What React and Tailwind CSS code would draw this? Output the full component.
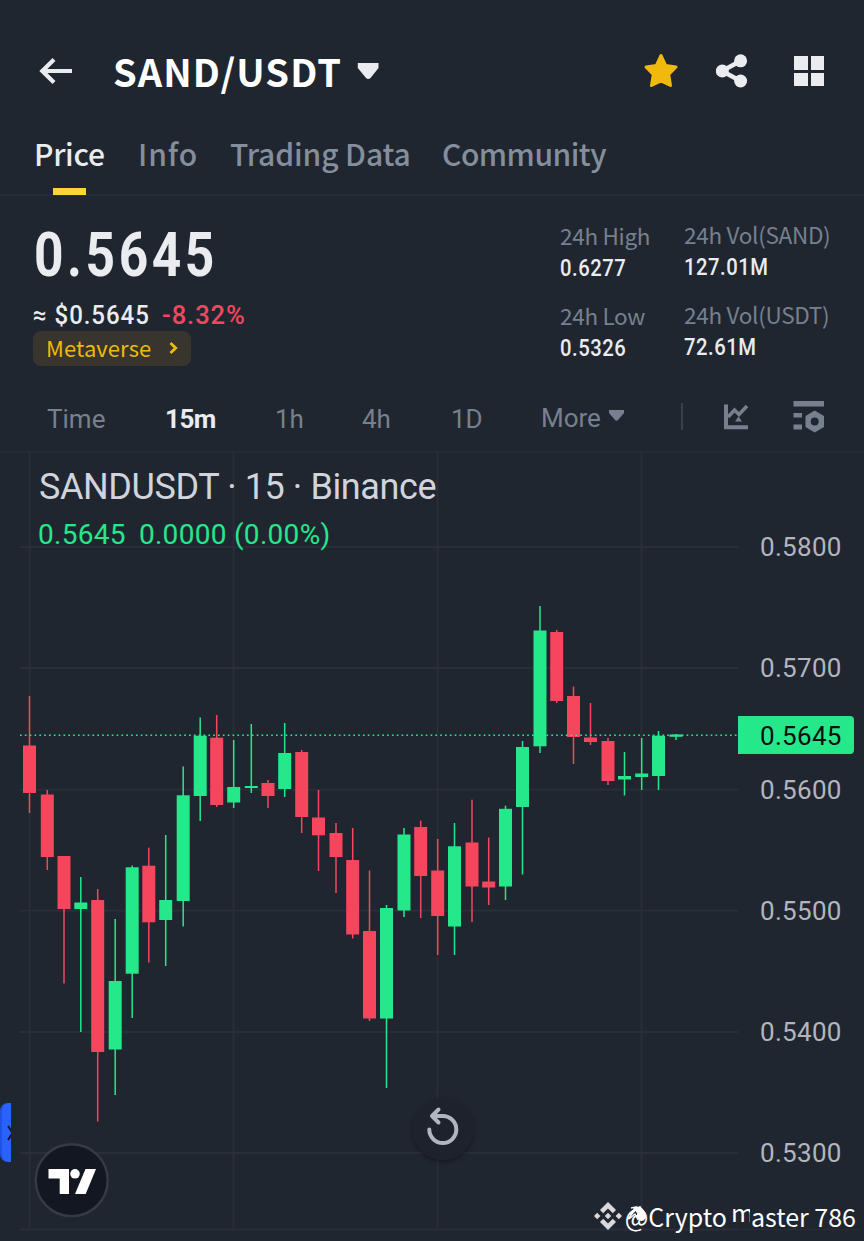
import { clsx } from "clsx";

const tabs = [
  { label: "Price", active: true, className: "ml-[34px] w-[104px] tracking-[-0.3px]" },
  { label: "Info", className: "w-[92px] tracking-[0.9px]" },
  { label: "Trading Data", className: "w-[212px] tracking-[-0.1px]" },
  { label: "Community", className: "tracking-[-0.5px]" },
];

const stats = [
  { label: "24h High", value: "0.6277" },
  { label: "24h Vol(SAND)", value: "127.01M" },
  { label: "24h Low", value: "0.5326" },
  { label: "24h Vol(USDT)", value: "72.61M" },
];

const intervals = [
  { label: "Time", className: "w-[119px]" },
  { label: "15m", active: true, className: "w-[109px] tracking-[-0.5px]" },
  { label: "1h", className: "w-[87px]" },
  { label: "4h", className: "w-[89px]" },
  { label: "1D", className: "w-[90px]" },
];

const prices = ["0.5800", "0.5700", "0.5600", "0.5500", "0.5400", "0.5300"];

// [x, high, low, body top, body bottom, rising]
const candles = [
  [29.5, 696, 813, 745.5, 793, 0],
  [47.3, 790, 870, 794.5, 857, 0],
  [64, 856, 983.5, 856, 909, 0],
  [80.8, 877, 1032, 902.5, 909, 1],
  [97.7, 889, 1121.5, 900, 1052, 0],
  [115.2, 919, 1095, 981, 1049.5, 1],
  [132.2, 865.5, 1018, 867.3, 973.7, 1],
  [148.8, 847.7, 962.5, 865.7, 922.3, 0],
  [165.7, 835, 966, 900, 920, 1],
  [183.2, 766.5, 926.5, 795.3, 901, 1],
  [200.2, 717.5, 821, 735.7, 796, 1],
  [216.7, 715, 807, 737.7, 805, 0],
  [233.7, 740, 808, 787, 802.5, 1],
  [251.3, 724, 793, 786, 788, 1],
  [268, 780, 808, 783, 796, 0],
  [284.7, 723, 797, 753, 789, 1],
  [301.7, 750, 833, 752, 817, 0],
  [318.5, 790, 871, 817.5, 835.3, 0],
  [336, 823, 893, 833, 857, 0],
  [352.7, 828, 938.5, 860, 934.5, 0],
  [369.5, 870.5, 1021, 931, 1018.5, 0],
  [386.5, 905, 1088, 908, 1018.5, 1],
  [404, 828, 917, 834.5, 910.5, 1],
  [420.7, 820.7, 918, 827, 876, 0],
  [437.7, 839, 955, 870.5, 916, 0],
  [454.5, 823, 955, 846.3, 926.5, 1],
  [472, 799.7, 922, 842.5, 886.5, 0],
  [488.7, 837.5, 905, 881.5, 887.5, 0],
  [505.5, 805.7, 900, 808.8, 886.5, 1],
  [522.5, 741, 874.5, 747, 807, 1],
  [540, 606, 753, 630.5, 746.3, 1],
  [556.7, 630, 703, 632, 701, 0],
  [573.5, 686.5, 764, 696, 737, 0],
  [590.5, 703, 745, 737.5, 742, 0],
  [608, 738, 785, 741, 781, 0],
  [624.5, 752, 795.5, 776, 779.5, 1],
  [641.7, 738, 790, 773.5, 777, 1],
  [658.5, 731, 790, 735.7, 776, 1],
  [676, 734, 740, 734.5, 736.8, 1],
];

function Header() {
  return (
    <header className="flex h-[142px] items-center text-[#eaecef]">
      <svg className="ml-[38px] h-[28px] w-[36px]" viewBox="38 57 36 28" fill="none" stroke="currentColor" strokeWidth="4.2">
        <path d="M72 71H42M54 59.500L42.300 71L54 82.500" />
      </svg>
      <h1 className="ml-[39px] w-[231px] whitespace-nowrap font-['Noto_Sans_CJK_SC','Noto_Sans',sans-serif] text-[38px] font-bold leading-none tracking-[1.1px] text-white">
        SAND/USDT
      </h1>
      <svg className="ml-[13px] h-[16px] w-[22px]" viewBox="357 63 22 16" fill="currentColor">
        <path d="M357.800 63H378.500V68L370.500 78Q368.200 80 366 78L357.800 68Z" />
      </svg>
      <svg className="ml-[264px] h-[36px] w-[36px]" viewBox="643 53 36 36" fill="#f0b90b" stroke="#f0b90b" strokeWidth="3" strokeLinejoin="round">
        <path d="M661 55.500L665.600 65.500L676 67L668.700 74.500L670.500 85.500L661 81L651.500 85.500L653.300 74.500L646 67L656.400 65.500Z" />
      </svg>
      <svg className="ml-[37px] h-[36px] w-[32px]" viewBox="716 53 32 36" fill="currentColor">
        <path d="M740.500 61L722 71L740.500 81" fill="none" stroke="currentColor" strokeWidth="4.500" />
        <circle cx="722.300" cy="71" r="6.500" />
        <circle cx="740.600" cy="60.800" r="6.500" />
        <circle cx="740.600" cy="81" r="6.500" />
      </svg>
      <div className="ml-[46px] grid grid-cols-2 gap-[3px]">
        <span className="size-[13.500px] bg-current" />
        <span className="size-[13.500px] bg-current" />
        <span className="size-[13.500px] bg-current" />
        <span className="size-[13.500px] bg-current" />
      </div>
    </header>
  );
}

function Tabs() {
  return (
    <nav className="flex h-[54px] border-b-2 border-[#272c35] font-['Noto_Sans_CJK_SC','Noto_Sans',sans-serif] text-[30px] font-medium leading-[23px] text-[#848e9c]">
      {tabs.map((tab) => (
        <div key={tab.label} className={clsx("flex flex-col whitespace-nowrap", tab.className)}>
          <span className={clsx(tab.active && "text-[#eaecef]")}>{tab.label}</span>
          {tab.active && <span className="mt-[23px] ml-[19px] h-[7px] w-[33px] shrink-0 bg-[#fcd535]" />}
        </div>
      ))}
    </nav>
  );
}

function Summary() {
  return (
    <section className="flex h-[183px] pt-[27px]">
      <div className="w-[526px] pl-[34px] text-[#eaecef]">
        <div className="h-[64px] w-[200px] origin-left scale-x-[0.83] text-[62px] font-bold leading-[64px] tracking-[4.300px]">0.5645</div>
        <div className="mt-[12px] flex h-[32px] items-center whitespace-nowrap text-[26px] font-medium leading-none tracking-[1px]">
          <span className="-ml-px w-[129px] origin-left scale-x-[0.925]">≈ $0.5645</span>
          <span className="origin-left scale-x-[0.98] text-[#f6465d]">-8.32%</span>
        </div>
        <div className="-ml-px flex h-[35px] w-[158px] items-center rounded-[8px] bg-[#37352d] pl-[13px] font-['Noto_Sans_CJK_SC','Noto_Sans',sans-serif] text-[22px] leading-none text-[#f0b90b]">
          <span className="-mt-[4px] w-[123px] tracking-[0.1px]">Metaverse</span>
          <svg className="-mt-px h-[12px] w-[9px]" viewBox="0 0 9 12" fill="none" stroke="currentColor" strokeWidth="2.800">
            <path d="M1.500 1L6.700 6L1.500 11" />
          </svg>
        </div>
      </div>
      <dl className="grid h-[160px] grid-cols-[124px_150px] grid-rows-[80px_80px] pl-[34px]">
        {stats.map((stat) => (
          <div key={stat.label} className="whitespace-nowrap even:-mt-px">
            <dt className="h-[28px] font-['Noto_Sans_CJK_SC','Noto_Sans',sans-serif] text-[22.500px] leading-[24px] tracking-[-0.3px] text-[#76808f]">
              {stat.label}
            </dt>
            <dd className="h-[34px] w-[120px] origin-left scale-x-[0.88] text-[23px] font-medium leading-[35px] tracking-[0.6px] text-[#eaecef]">
              {stat.value}
            </dd>
          </div>
        ))}
      </dl>
    </section>
  );
}

function Intervals() {
  return (
    <div className="flex h-[74px] items-center border-b-2 border-[#272b35] pt-[7px] pl-[47px] text-[26px] text-[#76808f]">
      {intervals.map((item) => (
        <span key={item.label} className={clsx("relative top-px", item.className, item.active && "-left-px font-bold text-[#eaecef]")}>
          {item.label}
        </span>
      ))}
      <span className="w-[68px]">More</span>
      <svg className="-mt-[6px] h-[11px] w-[15px]" viewBox="0 0 15 11" fill="currentColor">
        <path d="M0 0H15V3L9 10Q7.500 11.500 6 10L0 3Z" />
      </svg>
      <span className="-mt-[4px] ml-[57px] h-[27px] w-[2px] bg-[#38404c]" />
      <svg className="-mt-[3px] ml-[40px] h-[26px] w-[26px]" viewBox="723 404 26 26" fill="none" stroke="currentColor" strokeWidth="4">
        <path d="M726 404.500V427.300H748" />
        <path d="M728 417L734.500 410L739 414.500L747 406" strokeWidth="3.500" />
        <path d="M738.500 416.500L742 421.500H735Z" fill="currentColor" stroke="none" />
      </svg>
      <svg className="-mt-[3px] ml-[44px] h-[32px] w-[32px]" viewBox="793 402 32 32" fill="currentColor">
        <path d="M793.500 402H824V407.500H793.500ZM793.500 414H802V418.500H793.500ZM793.500 425.500H802V430.500H793.500Z" />
        <path fillRule="evenodd" d="M814.700 411.500L824 417V428L814.700 433.500L805.500 428V417ZM814.700 418.500A4 4 0 1 0 814.700 426.500A4 4 0 1 0 814.700 418.500Z" />
      </svg>
    </div>
  );
}

function Candles() {
  return (
    <svg className="h-[788px] w-[738px] shrink-0" viewBox="0 453 738 788">
      <g stroke="#2a2e38" strokeWidth="1.800">
        {[29.5, 233.5, 437.5, 641.5].map((x) => (
          <path key={x} d={`M${x} 453V1229`} />
        ))}
        {[547, 668, 789.7, 910.7, 1032, 1153, 1229.5].map((y) => (
          <path key={y} d={`M20 ${y}H738`} />
        ))}
      </g>
      {candles.map(([x, high, low, top, bottom, rising]) => (
        <g key={x} fill={rising ? "#25e88b" : "#f6465d"}>
          <rect x={x - 0.75} y={high} width="1.5" height={low - high} />
          <rect x={x - 6.5} y={top} width="13" height={bottom - top} />
        </g>
      ))}
      <path d="M20 735.200H738" stroke="#25e88b" strokeWidth="1.600" strokeDasharray="1.700 3.130" />
    </svg>
  );
}

function PriceAxis() {
  return (
    <div className="relative flex-1 pt-[34px] text-[26px] tracking-[0.3px] text-[#b2b5be]">
      {prices.map((price) => (
        <div key={price} className="h-[121.250px] pl-[22px] leading-[121.500px]">
          {price}
        </div>
      ))}
      <div className="absolute top-[263px] left-0 h-[38px] w-[116px] rounded-r-[4px] bg-[#25e88b] pl-[22px] leading-[40px] text-[#0c0e12]">
        0.5645
      </div>
      <div className="absolute top-[776px] left-0 h-px w-[122px] bg-[#292d37]" />
    </div>
  );
}

function Watermark() {
  return (
    <div className="absolute right-[8px] bottom-[7px] flex h-[36px] items-center whitespace-nowrap font-['Noto_Sans_CJK_SC','Noto_Sans',sans-serif] text-[25px] leading-none text-white">
      <svg className="mr-[3px] size-[28px]" viewBox="0 0 28 28" fill="#d9d9db">
        <path d="M14 0L22 8L18.800 11.200L14 6.400L9.200 11.200L6 8ZM14 28L22 20L18.800 16.800L14 21.600L9.200 16.800L6 20ZM14 10.800L17.200 14L14 17.200L10.800 14ZM3.200 10.800L6.400 14L3.200 17.200L0 14ZM24.800 10.800L28 14L24.800 17.200L21.600 14Z" />
      </svg>
      <span className="relative">
        @
        <svg className="absolute top-[1px] left-[1px] h-[20px] w-[20px]" viewBox="0 0 20 20" fill="none" stroke="white" strokeWidth="1.300">
          <path d="M1 15L11 3M5 3L10 2L4 10M3 14L9 9L12 15" />
          <path d="M8 3L14 2L11 7Z" fill="white" />
          <path d="M14 2Q21 9 19 13Q15 18 11.500 12Q11 7 14 2Z" fill="white" />
        </svg>
      </span>
      <span>Crypto</span>
      <span className="relative -top-[5px] -left-px ml-[5px] h-[22px] w-[19px] overflow-hidden">m</span>
      <span>aster 786</span>
    </div>
  );
}

function Chart() {
  return (
    <section className="relative flex h-[788px]">
      <Candles />
      <PriceAxis />
      <div className="absolute top-[13px] left-[39px] whitespace-nowrap">
        <p className="text-[36px] leading-[42px] tracking-[-0.4px] text-[#d1d4dc]">SANDUSDT · 15 · Binance</p>
        <p className="mt-[10px] -ml-px flex gap-[13px] text-[28px] leading-[34px] tracking-[0.3px] text-[#25e88b]">
          <span>0.5645</span>
          <span>0.0000 (0.00%)</span>
        </p>
      </div>
      <div className="absolute top-[650px] left-0 h-[59px] w-[11px] overflow-hidden rounded-l-[8px] border-l-2 border-[#1e53e5] bg-[#2962ff]">
        <svg className="absolute top-[22px] left-[4px] h-[16px] w-[8px]" viewBox="0 0 8 16" fill="none" stroke="#131722" strokeWidth="2">
          <path d="M2 1L6.500 8L2 15" />
        </svg>
      </div>
      <svg className="absolute top-[689px] left-[34px] size-[75px]" viewBox="34 1142 75 75" fill="white">
        <circle cx="71.700" cy="1180.200" r="36" fill="#131722" stroke="#363a45" strokeWidth="2.400" />
        <path d="M48.500 1169H69V1194H59.700V1178.500H48.500Z" />
        <circle cx="75" cy="1173.800" r="4.800" />
        <path d="M85.500 1169H96L85.700 1194H75Z" />
      </svg>
      <div className="absolute top-[645px] left-[412px] flex size-[62px] items-center justify-center rounded-full bg-[#1e222d] shadow-[0_2px_4px_rgba(0,0,0,0.35)]">
        <svg className="-mt-[6px] size-[44px]" viewBox="421 1104 44 44" fill="none" stroke="#b2b5be" strokeWidth="4" strokeLinecap="round" strokeLinejoin="round">
          <path d="M429.300 1129.500A13.500 13.500 0 1 0 442.800 1116H432.500M438.500 1109.500L432 1116L438.500 1122.500" />
        </svg>
      </div>
      <Watermark />
    </section>
  );
}

export default function App() {
  return (
    <main className="h-[1241px] w-[864px] overflow-hidden bg-[#202630] font-[Roboto,sans-serif]">
      <Header />
      <Tabs />
      <Summary />
      <Intervals />
      <Chart />
    </main>
  );
}
